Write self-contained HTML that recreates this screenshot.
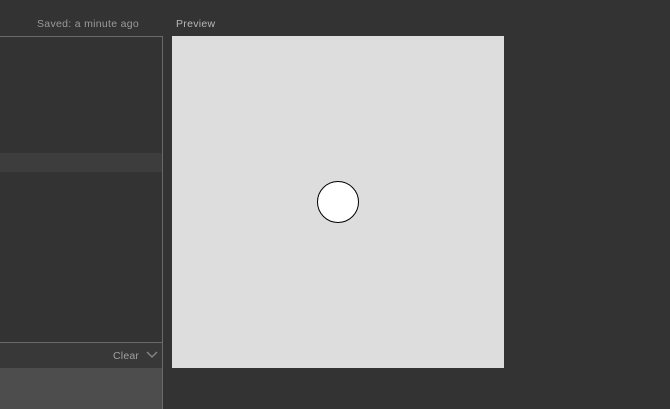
<!DOCTYPE html>
<html><head><style>
body{margin:0;width:670px;height:409px;background:#333;position:relative;overflow:hidden;font-family:"Liberation Sans",sans-serif}
div{position:absolute;box-sizing:border-box}
</style></head><body>
<div style="left:37px;top:18px;font-size:10.5px;color:#9a9a9a;white-space:nowrap;letter-spacing:0.3px">Saved: a minute ago</div>
<div style="left:176px;top:18px;font-size:10.5px;color:#b8b8b8;letter-spacing:0.3px">Preview</div>
<div style="left:0;top:36px;width:163px;height:373px;border-top:1px solid #6a6a6a;border-right:1px solid #6a6a6a;background:#333"></div>
<div style="left:0;top:153px;width:162px;height:19px;background:#3d3d3d"></div>
<div style="left:0;top:342px;width:162px;height:1px;background:#6a6a6a"></div>
<div style="left:0;top:343px;width:162px;height:25px;background:#383838"></div>
<div style="left:0;top:368px;width:162px;height:41px;background:#4d4d4d"></div>
<div style="left:113px;top:350px;font-size:10.5px;color:#a0a0a0;letter-spacing:0.2px">Clear</div>
<svg style="position:absolute;left:146px;top:351px" width="12" height="8"><path d="M1 1L6 6L11 1" stroke="#888" stroke-width="1.3" fill="none"/></svg>
<div style="left:172px;top:36px;width:332px;height:332px;background:#dddddd"></div>
<svg style="position:absolute;left:316px;top:181px" width="44" height="44"><circle cx="22" cy="21" r="20.5" fill="#fff" stroke="#000" stroke-width="1"/></svg>
</body></html>
